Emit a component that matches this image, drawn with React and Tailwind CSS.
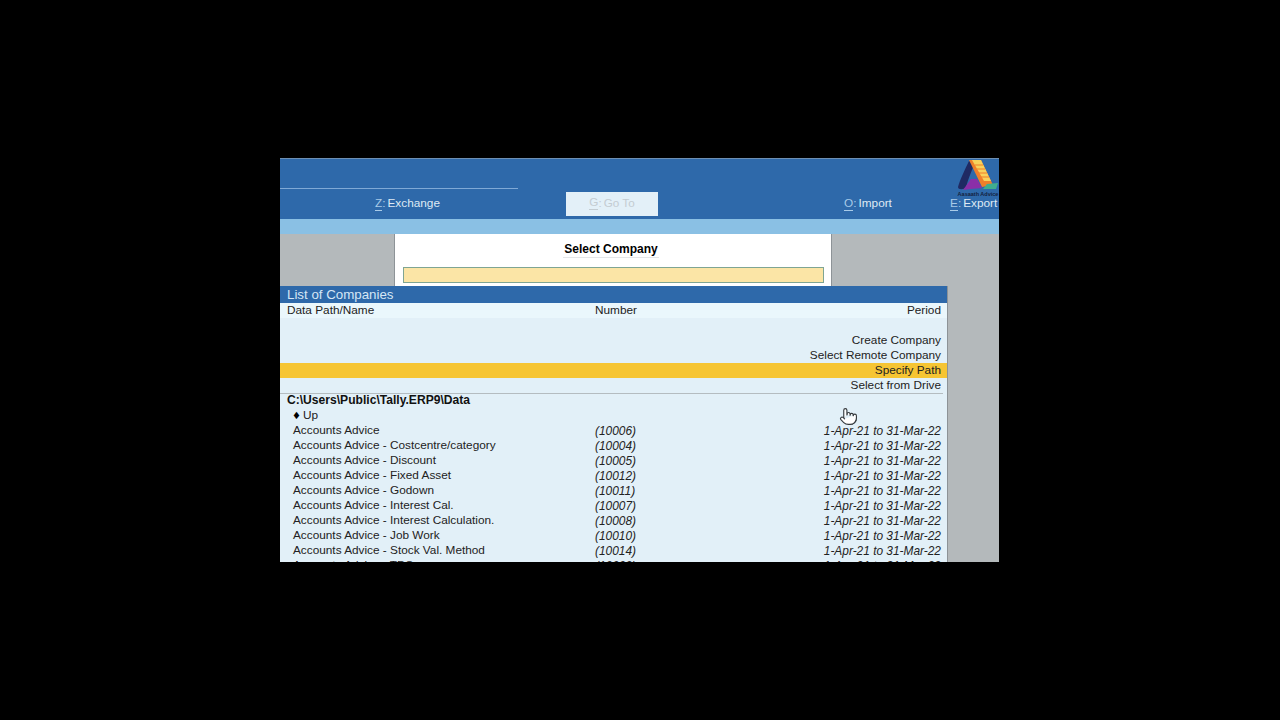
import { Pointer } from 'lucide-react';

const companies = [
  ['Accounts Advice', '(10006)'],
  ['Accounts Advice - Costcentre/category', '(10004)'],
  ['Accounts Advice - Discount', '(10005)'],
  ['Accounts Advice - Fixed Asset', '(10012)'],
  ['Accounts Advice - Godown', '(10011)'],
  ['Accounts Advice - Interest Cal.', '(10007)'],
  ['Accounts Advice - Interest Calculation.', '(10008)'],
  ['Accounts Advice - Job Work', '(10010)'],
  ['Accounts Advice - Stock Val. Method', '(10014)'],
  ['Accounts Advice - TDS', '(10009)'],
];

function TopButton({ letter, label, className }) {
  return (
    <div className={`flex items-start text-[11.8px] leading-[14px] text-[#dfeaf4] ${className}`}>
      <span className="text-[#a9cbe8] border-b border-[#a9cbe8]">{letter}</span>
      <span className="text-[#a9cbe8] mr-[2px]">:</span>
      {label}
    </div>
  );
}

function Logo() {
  return (
    <div className="absolute right-0 top-[2px] w-[42px] flex flex-col items-center">
      <svg width="42" height="30" viewBox="0 0 42 30">
        <path d="M1 27 C3 20 8 9 12 1 L17 5 C14 12 11 20 9 27 C7 30 1 30 1 27 Z" fill="#1f2a63" />
        <path d="M6 30 L14 19 L20 19 L25 28 L14 29 Z" fill="#8a2fa8" />
        <path d="M12 0 L24 0 L36 25 L25 27 Z" fill="#ef7f2a" />
        <path d="M15 0 L24 0 L34 21 L27 21 Z" fill="#f7d25c" />
        <path d="M18 5 L26 5 M20 9 L28 9 M22 13 L30 13 M24 17 L32 17" stroke="#ef7f2a" strokeWidth="1" />
        <path d="M26 29 L30 24 L41 23 L39 29 Z" fill="#3fae8e" />
      </svg>
      <span className="mt-[1px] text-[5.5px] leading-[6px] font-bold text-[#14223f] whitespace-nowrap">Aasaath Advice</span>
    </div>
  );
}

function ActionRow({ children, active }) {
  return (
    <div className={`h-[15px] leading-[15px] text-right pr-[6px] text-[11.8px] text-[#222] ${active ? 'bg-[#f6c533]' : ''}`}>
      {children}
    </div>
  );
}

export default function App() {
  return (
    <div className="h-[720px] bg-black pt-[158px] font-['Liberation_Sans',Arial,sans-serif]">
      <div className="relative ml-[280px] w-[719px] h-[404px] overflow-hidden bg-[#b4b9bb]">
        {/* barra superior */}
        <div className="h-[61px] bg-[#2e69aa] border-t border-[#6d8fb3]">
          <div className="h-[30px] w-[238px] border-b border-[#7fa9d6]" />
          <div className="flex items-center h-[30px] pb-[1px]">
            <TopButton letter="Z" label="Exchange" className="ml-[95px] w-[191px]" />
            <div className="w-[92px] h-[24px] pb-[2px] bg-[#e3f0f8] flex items-center justify-center text-[11.7px] text-[#c3ccd2]">
              <span className="border-b border-[#c3ccd2] leading-[14px]">G</span>
              <span className="mr-[2px]">:</span>
              Go To
            </div>
            <TopButton letter="O" label="Import" className="ml-[186px] w-[106px]" />
            <TopButton letter="E" label="Export" />
          </div>
        </div>
        <Logo />
        <div className="h-[15px] bg-[#8ac0e4]" />

        {/* panel Select Company */}
        <div className="ml-[114px] w-[438px] h-[52px] bg-white border-x border-[#8d9397] pt-[8px]">
          <div className="w-[96px] ml-[168px] text-xs font-bold text-black text-center leading-[15px] border-b border-[#e4e6e8] whitespace-nowrap">
            Select Company
          </div>
          <div className="ml-[8px] mt-[9px] w-[421px] h-[16px] bg-[#fbe5a6] border border-[#7fa593]" />
        </div>

        {/* lista */}
        <div className="w-[668px] h-[276px] overflow-hidden bg-[#e2f0f8] border-r border-[#8d9397]">
          <div className="h-[17px] bg-[#2e69aa] pl-[7px] text-[13.3px] leading-[18px] text-[#d5e6f5]">List of Companies</div>
          <div className="flex h-[15px] leading-[15px] bg-[#eaf7fc] text-[11.8px] text-[#222] px-[7px]">
            <span className="w-[308px]">Data Path/Name</span>
            <span>Number</span>
            <span className="ml-auto mr-[-1px]">Period</span>
          </div>
          <div className="h-[15px]" />
          <ActionRow>Create Company</ActionRow>
          <ActionRow>Select Remote Company</ActionRow>
          <ActionRow active>Specify Path</ActionRow>
          <ActionRow>Select from Drive</ActionRow>
          <div className="mr-[4px] border-b border-[#b4bcc0]" />
          <div className="h-[14px] leading-[13px] pl-[7px] text-[12.1px] font-bold text-[#111]">C:\Users\Public\Tally.ERP9\Data</div>
          <div className="flex items-center h-[15px] pl-[12px] text-[11.8px] text-[#222]">
            <span className="text-[10px] w-[11px] text-black font-['DejaVu_Sans']">♦</span>
            Up
          </div>
          {companies.map(([name, number]) => (
            <div key={number} className="flex h-[15px] leading-[15px] pl-[13px] pr-[6px] text-[11.8px] text-[#222]">
              <span className="w-[302px]">{name}</span>
              <span className="italic leading-[17px] text-[11.9px]">{number}</span>
              <span className="italic leading-[17px] text-[11.9px] ml-auto">1-Apr-21 to 31-Mar-22</span>
            </div>
          ))}
        </div>

        <Pointer className="absolute left-[559px] top-[249px] text-[#33383c] fill-white" size={19} strokeWidth={1.4} />
      </div>
    </div>
  );
}
